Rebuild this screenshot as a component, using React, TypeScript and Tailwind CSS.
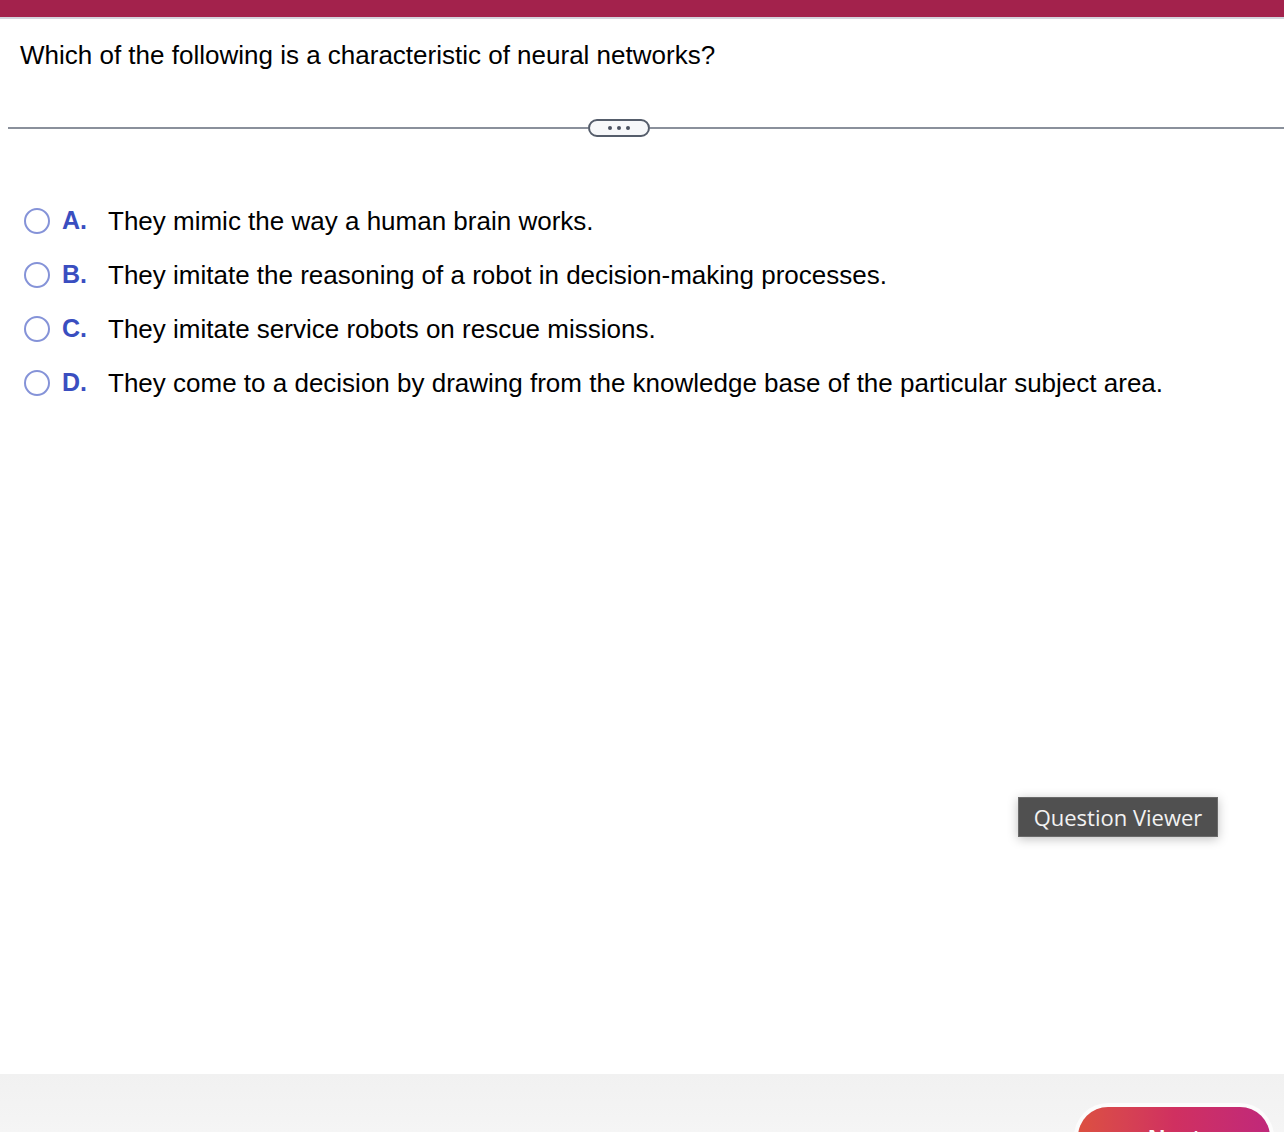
export default function App() {
  const options = [
    { letter: "A.", text: "They mimic the way a human brain works." },
    { letter: "B.", text: "They imitate the reasoning of a robot in decision-making processes." },
    { letter: "C.", text: "They imitate service robots on rescue missions." },
    { letter: "D.", text: "They come to a decision by drawing from the knowledge base of the particular subject area." },
  ];

  return (
    <div className="w-[1284px] h-[1132px] overflow-hidden bg-white flex flex-col font-['Liberation_Sans',Arial,sans-serif]">
      {/* Top bar */}
      <div className="h-[17px] bg-[#a3224c] shrink-0" />
      <div className="h-[2px] bg-[#d4d4dc] shrink-0" />

      <div className="flex-1 flex flex-col">
        <div className="px-[20px] pt-[21px] text-[26px] leading-[30px] text-black">
          Which of the following is a characteristic of neural networks?
        </div>

        {/* Divider */}
        <div className="ml-[8px] mt-[49px] flex items-center">
          <div className="w-[580px] h-[2px] bg-[#8a909b]" />
          <div className="w-[62px] h-[18px] border-2 border-[#555d6b] rounded-full flex items-center justify-center gap-[5px] bg-[#f7f8fa]">
            <span className="w-[4px] h-[4px] rounded-full bg-[#4b5260]" />
            <span className="w-[4px] h-[4px] rounded-full bg-[#4b5260]" />
            <span className="w-[4px] h-[4px] rounded-full bg-[#4b5260]" />
          </div>
          <div className="flex-1 h-[2px] bg-[#8a909b]" />
        </div>

        {/* Options */}
        <div className="mt-[69px] flex flex-col gap-[24px] pl-[24px]">
          {options.map((o) => (
            <label key={o.letter} className="flex items-center h-[30px] cursor-pointer">
              <span className="w-[26px] h-[26px] rounded-full border-[2.5px] border-[#8593d8] bg-white shrink-0" />
              <span className="ml-[12px] w-[46px] text-[25px] font-bold text-[#3a4ec0]">{o.letter}</span>
              <span className="text-[26px] text-black">{o.text}</span>
            </label>
          ))}
        </div>

        <div className="flex-1 flex justify-end pr-[66px] pt-[399px]">
          <div>
            <button className="w-[200px] h-[40px] bg-[#505050] border border-[#6a6a6a] text-[#f2f2f2] text-[22px] font-['Open_Sans',sans-serif] shadow-[0_2px_10px_rgba(0,0,0,0.25)]">
              Question Viewer
            </button>
          </div>
        </div>
      </div>

      {/* Footer */}
      <div className="h-[58px] shrink-0 bg-gradient-to-b from-[#f1f1f1] to-[#f5f5f5] flex justify-end pr-[14px] pt-[33px]">
        <div className="w-[192px] h-[60px] rounded-[30px] bg-gradient-to-r from-[#dc5040] via-[#d03060] to-[#c0287a] ring-4 ring-white/70 text-white text-[24px] font-bold flex justify-center pt-[14px]">
          Next
        </div>
      </div>
    </div>
  );
}
